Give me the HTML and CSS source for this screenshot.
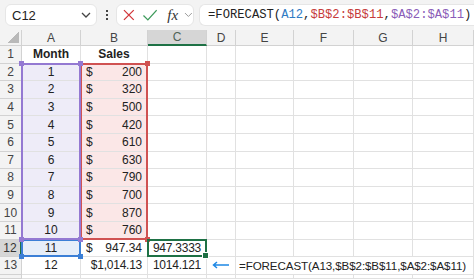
FILE: index.html
```html
<!DOCTYPE html>
<html lang="en">
<head>
    <meta charset="UTF-8">
    <meta name="viewport" content="width=device-width, initial-scale=1.0">
    <title>FORECAST</title>
    <link rel="stylesheet" href="styles.css">
</head>
<body>
    <div class="toolbar">
        <div class="name-box">
            <span>C12</span>
            <svg width="10" height="6" viewBox="0 0 10 6"><path d="M1 1l4 4 4-4" fill="none" stroke="#444" stroke-width="1.3"/></svg>
        </div>
        <div class="dots"><i></i><i></i><i></i></div>
        <div class="edit-box">
            <svg width="14" height="14" viewBox="0 0 14 14"><path d="M2 2l10 10M12 2L2 12" stroke="#d13438" stroke-width="1.3"/></svg>
            <svg width="16" height="14" viewBox="0 0 16 14"><path d="M1.5 7.5l4.5 4.5 9-10" fill="none" stroke="#3d9a5b" stroke-width="1.3"/></svg>
            <span class="fx">fx</span>
            <svg width="9" height="6" viewBox="0 0 9 6"><path d="M1 1l3.5 3.5L8 1" fill="none" stroke="#999" stroke-width="1"/></svg>
        </div>
        <div class="formula-box">=FORECAST(<span class="ref-blue">A12</span>,<span class="ref-red">$B$2:$B$11</span>,<span class="ref-purple">$A$2:$A$11</span>)</div>
    </div>

    <div class="sheet" id="sheet">
        <div class="range range-red"></div>
        <div class="range range-blue"></div>
        <div class="range range-purple"></div>
        <div class="range range-green"></div>
    </div>

    <script>
        const columns = ['A', 'B', 'C', 'D', 'E', 'F', 'G', 'H'];
        const sales = [200, 320, 500, 420, 610, 630, 790, 700, 870, 760];

        // one entry per sheet row, cells from column A
        const rows = [];
        rows.push([{ text: 'Month', cls: 'bold center' }, { text: 'Sales', cls: 'bold center' }]);
        sales.forEach((s, i) => {
            rows.push([{ text: i + 1, cls: 'center fill-purple' }, { money: s, cls: 'fill-red' }]);
        });
        rows.push([{ text: 11, cls: 'center fill-blue' }, { money: '947.34' }, { text: '947.3333', cls: 'right' }]);
        rows.push([
            { text: 12, cls: 'center' },
            { text: '$1,014.13', cls: 'right' },
            { text: '1014.121', cls: 'right' },
            { arrow: true, cls: 'center' },
            { text: '=FORECAST(A13,$B$2:$B$11,$A$2:$A$11)', cls: 'note', span: 4 }
        ]);
        rows.push([]);

        function makeCell(cls, content) {
            const div = document.createElement('div');
            div.className = 'cell ' + (cls || '');
            if (content !== undefined) div.innerHTML = content;
            return div;
        }

        const frag = document.createDocumentFragment();
        frag.appendChild(makeCell('corner'));
        columns.forEach(c => {
            frag.appendChild(makeCell('head col-head' + (c === 'C' ? ' active-col' : ''), c));
        });

        rows.forEach((row, r) => {
            const num = r + 1;
            // last row is only partly on screen, leave its number off
            const label = num <= 13 ? num : '';
            frag.appendChild(makeCell('head row-head' + (num === 12 ? ' active-row' : ''), label));
            let col = 0;
            while (col < columns.length) {
                const data = row[col];
                let cell;
                if (!data) {
                    cell = makeCell('');
                } else if (data.money !== undefined) {
                    cell = makeCell('money ' + (data.cls || ''), '<span>$</span><span>' + data.money + '</span>');
                } else if (data.arrow) {
                    cell = makeCell(data.cls, '<svg width="18" height="8" viewBox="0 0 18 8"><path d="M17 4H2M5 1L1.5 4 5 7" fill="none" stroke="#1e88e5" stroke-width="1.5"/></svg>');
                } else {
                    cell = makeCell(data.cls, data.text);
                }
                if (data && data.span) {
                    cell.classList.add('span-' + data.span);
                    col += data.span;
                } else {
                    col++;
                }
                frag.appendChild(cell);
            }
        });

        document.getElementById('sheet').prepend(frag);
    </script>
</body>
</html>
```

FILE: styles.css
```css
body {
    margin: 0;
    width: 474px;
    height: 279px;
    overflow: hidden;
    font-family: "Liberation Sans", Arial, sans-serif;
    font-size: 12px;
    color: #222;
    background: #fff;
}

/* formula bar */
.toolbar {
    display: flex;
    align-items: center;
    height: 30px;
    padding-left: 5px;
    background: #f3f3f3;
}
.name-box {
    display: flex;
    align-items: center;
    justify-content: space-between;
    box-sizing: border-box;
    width: 92px;
    height: 22px;
    padding: 0 5px 0 6px;
    background: #fff;
    border: 1px solid #e6e6e6;
    border-radius: 6px;
    font-size: 13px;
}
.dots {
    display: flex;
    flex-direction: column;
    gap: 2px;
    margin: 0 8px 0 9px;
}
.dots i {
    width: 2px;
    height: 2px;
    background: #444;
}
.edit-box {
    display: flex;
    align-items: center;
    gap: 6px;
    box-sizing: border-box;
    width: 78px;
    height: 22px;
    padding-left: 5px;
    background: #fff;
    border: 1px solid #e6e6e6;
    border-radius: 6px;
}
.fx {
    margin-left: 4px;
    font-family: "Liberation Serif", serif;
    font-style: italic;
    font-size: 15px;
    color: #333;
}
.formula-box {
    flex: 1;
    box-sizing: border-box;
    height: 22px;
    margin-left: 5px;
    padding-left: 8px;
    line-height: 21px;
    background: #fff;
    border: 1px solid #e6e6e6;
    border-right: none;
    border-radius: 6px 0 0 6px;
    font-family: "Liberation Mono", monospace;
    font-size: 12.2px;
    white-space: nowrap;
    overflow: hidden;
}
.ref-blue { color: #2f7bc4; }
.ref-red { color: #c63b3b; }
.ref-purple { color: #8a5cb8; }

/* grid */
.sheet {
    position: relative;
    display: grid;
    grid-template-columns: 22px 59px 67px 59px 29px 58px 60px 59px 61px;
    grid-template-rows: 16px repeat(13, 17.6px) 1fr;
    height: 249px;
}
.cell {
    display: flex;
    align-items: center;
    box-sizing: border-box;
    padding: 0 5px;
    border-right: 1px solid #e1e1e1;
    border-bottom: 1px solid #e1e1e1;
    white-space: nowrap;
    overflow: hidden;
}
.head {
    justify-content: center;
    padding: 0;
    background: #f3f3f3;
    border-color: #d2d2d2;
    color: #444;
}
.corner {
    background: #f3f3f3 linear-gradient(to top left, #b9b9b9 50%, transparent 50%) no-repeat right 2px bottom 2px / 11px 11px;
    border-color: #d2d2d2;
}
.active-col {
    background: #d6d6d6;
    border-bottom: 2px solid #1e7145;
    color: #4f6356;
}
.active-row {
    background: #d6d6d6;
    border-right: 2px solid #1e7145;
    color: #333;
}
.center { justify-content: center; }
.right {
    justify-content: flex-end;
    padding: 0 5px 0 2px;
    letter-spacing: -0.25px;
}
.bold { font-weight: bold; }
.money { justify-content: space-between; }
.note {
    padding-left: 3px;
    font-size: 11.6px;
    letter-spacing: -0.1px;
}
.span-4 { grid-column: span 4; }
.fill-purple { background: #eeecf8; }
.fill-red { background: #fbe7e7; }
.fill-blue { background: #e6eef9; }

/* reference highlights drawn over the cells */
.range {
    position: absolute;
    top: -1px;
    left: -1px;
    right: 0;
    bottom: 0;
    border: 2px solid var(--c);
    pointer-events: none;
}
.range::after {
    content: '';
    position: absolute;
    inset: -4px;
    background:
        linear-gradient(var(--c), var(--c)) 0 0 / 5px 5px no-repeat,
        linear-gradient(var(--c), var(--c)) 100% 0 / 5px 5px no-repeat,
        linear-gradient(var(--c), var(--c)) 0 100% / 5px 5px no-repeat,
        linear-gradient(var(--c), var(--c)) 100% 100% / 5px 5px no-repeat;
}
.range-purple {
    --c: #9479d2;
    grid-column: 2 / 3;
    grid-row: 3 / 13;
}
.range-red {
    --c: #d05252;
    grid-column: 3 / 4;
    grid-row: 3 / 13;
}
.range-blue {
    --c: #3b7fd6;
    grid-column: 2 / 3;
    grid-row: 13 / 14;
}
.range-green {
    --c: #1e7145;
    grid-column: 4 / 5;
    grid-row: 13 / 14;
}
.range-green::after {
    inset: auto -4px -4px auto;
    width: 5px;
    height: 5px;
    background: var(--c);
    border: 1px solid #fff;
}
```
